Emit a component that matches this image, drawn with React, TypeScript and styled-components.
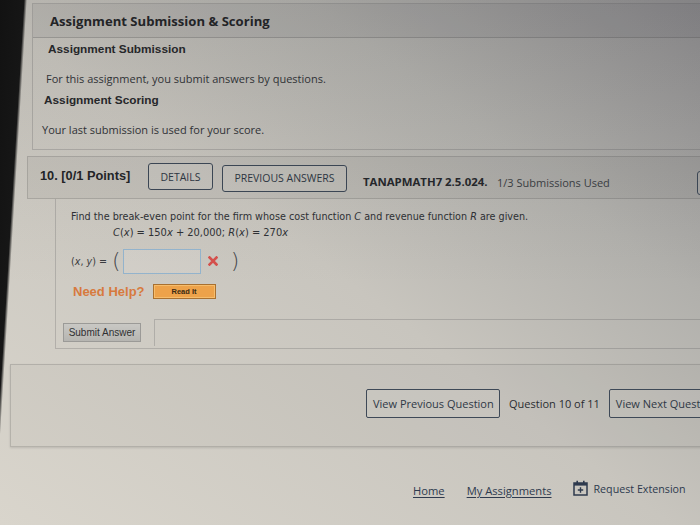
import React from "react";
import styled, { createGlobalStyle } from "styled-components";

const GlobalStyle = createGlobalStyle`
  html, body {
    margin: 0;
    padding: 0;
    width: 700px;
    height: 525px;
    overflow: hidden;
  }
  body {
    font-family: "Open Sans", "Liberation Sans", sans-serif;
    color: #2f3236;
    background:
      linear-gradient(93.5deg, #121212 0px, #161616 24px, rgba(0,0,0,0) 27px),
      linear-gradient(to bottom, rgba(40,40,40,0.08), rgba(40,40,40,0) 55%),
      linear-gradient(to top right, #d9d5cc 0%, #c8c5be 48%, #b1b0ac 72%, #8c8b8d 100%);
  }
`;

const Page = styled.div`
  width: 760px;
  padding-top: 3px;
  display: flex;
  flex-direction: column;
`;

/* ---------- summary panel ---------- */
const SummaryPanel = styled.section`
  margin-left: 32px;
  height: 145px;
  border: 1px solid rgba(70, 70, 72, 0.22);
  border-right: none;
  display: flex;
  flex-direction: column;
`;

const SummaryHeader = styled.div`
  height: 33px;
  display: flex;
  align-items: center;
  padding-left: 17px;
  background: rgba(60, 60, 64, 0.07);
  border-bottom: 1px solid rgba(70, 70, 72, 0.25);
`;

const Title = styled.h2`
  margin: 0;
  font-family: "Open Sans", sans-serif;
  font-weight: 700;
  font-size: 13.1px;
  color: #232427;
`;

const SubHeading = styled.div<{ $x: number; $top: number }>`
  margin-left: ${(p) => p.$x}px;
  margin-top: ${(p) => p.$top}px;
  height: 18px;
  line-height: 18px;
  font-family: "Liberation Sans", Arial, sans-serif;
  font-weight: 700;
  font-size: 11.8px;
  color: #26272a;
`;

const BodyText = styled.div<{ $x: number; $top: number }>`
  margin-left: ${(p) => p.$x}px;
  margin-top: ${(p) => p.$top}px;
  height: 18px;
  line-height: 18px;
  font-family: "Open Sans", sans-serif;
  font-size: 11px;
  color: #303236;
`;

/* ---------- question ---------- */
const QuestionBlock = styled.section`
  margin-left: 27px;
  margin-top: 6px;
  display: flex;
  flex-direction: column;
`;

const QuestionHeader = styled.div`
  height: 43px;
  box-sizing: border-box;
  border: 1px solid rgba(70, 70, 72, 0.2);
  border-right: none;
  background: rgba(60, 60, 64, 0.06);
  display: grid;
  grid-template-columns: 108px 74px 141px 134px 200px auto;
  align-items: center;
  padding-left: 12px;
`;

const Points = styled.span`
  font-family: "Liberation Sans", Arial, sans-serif;
  font-weight: 700;
  font-size: 12.8px;
  color: #232427;
  margin-top: -4px;
`;

const OutlineButton = styled.button<{ $w: number; $h: number; $drop?: number }>`
  width: ${(p) => p.$w}px;
  height: ${(p) => p.$h}px;
  margin-top: ${(p) => p.$drop ?? 0}px;
  box-sizing: border-box;
  border: 1.5px solid #3b4654;
  border-radius: 3px;
  background: rgba(255, 255, 255, 0.06);
  font-family: "Open Sans", sans-serif;
  font-size: 10.5px;
  color: #2d3642;
  padding: 0;
  white-space: nowrap;
  overflow: hidden;
  display: flex;
  align-items: center;
  justify-content: center;
`;

const Code = styled.span`
  font-family: "Open Sans", sans-serif;
  font-weight: 700;
  font-size: 11.4px;
  color: #25272b;
  margin-top: 8px;
`;

const Used = styled.span`
  font-family: "Open Sans", sans-serif;
  font-size: 11px;
  color: #3a3d42;
  margin-top: 10px;
`;

const QuestionBody = styled.div`
  margin-left: 28px;
  height: 150px;
  box-sizing: border-box;
  border-left: 1px solid rgba(70, 70, 72, 0.22);
  border-bottom: 1px solid rgba(70, 70, 72, 0.22);
  padding: 11px 0 0 15px;
  display: flex;
  flex-direction: column;
`;

const Prompt = styled.div`
  height: 14px;
  line-height: 14px;
  font-family: "DejaVu Sans", Verdana, sans-serif;
  font-size: 9.65px;
  color: #2e3034;
  white-space: nowrap;
`;

const Equation = styled(Prompt)`
  margin-top: 2px;
  margin-left: 42px;
  font-size: 9.9px;
`;

const Var = styled.i`
  font-style: italic;
`;

const AnswerRow = styled.div`
  margin-top: 7px;
  height: 28px;
  display: flex;
  align-items: center;
  font-family: "DejaVu Sans", Verdana, sans-serif;
  font-size: 9.6px;
  color: #3a3c40;
  white-space: pre;
`;

const Paren = styled.span<{ $side: "open" | "close" }>`
  font-family: "DejaVu Sans", sans-serif;
  font-size: 22px;
  font-weight: 300;
  color: #45474b;
  line-height: 28px;
  margin: ${(p) => (p.$side === "open" ? "0 2px 0 5px" : "0 2px")};
`;

const AnswerInput = styled.div`
  width: 78px;
  height: 25px;
  box-sizing: border-box;
  border: 1.5px solid #93b3cc;
  background: rgba(255, 255, 255, 0.1);
  margin-right: 7px;
`;

const Cross = styled.svg`
  width: 10px;
  height: 10px;
  margin-right: 11px;
`;

const HelpRow = styled.div`
  margin-top: 8px;
  height: 16px;
  display: flex;
  align-items: center;
  gap: 8px;
  padding-left: 2px;
`;

const NeedHelp = styled.span`
  font-family: "Liberation Sans", Arial, sans-serif;
  font-weight: 700;
  font-size: 13px;
  color: #d77a3e;
`;

const ReadIt = styled.button`
  width: 63px;
  height: 15px;
  box-sizing: border-box;
  border: 1px solid #a9702f;
  box-shadow: inset 0 0 0 1px #f6bd6c;
  background: #eda24a;
  font-family: "Liberation Sans", Arial, sans-serif;
  font-weight: 700;
  font-size: 7.5px;
  color: #3b2a14;
  padding: 0;
`;

const SubmitRow = styled.div`
  margin-top: 19px;
  margin-left: -8px;
  height: 28px;
  display: flex;
  align-items: center;
  gap: 13px;
`;

const SubmitButton = styled.button`
  width: 78px;
  height: 19px;
  margin-top: 0;
  box-sizing: border-box;
  border: 1px solid #9b9a97;
  background: linear-gradient(#c9c8c4, #b6b5b1);
  font-family: "Liberation Sans", Arial, sans-serif;
  font-size: 10px;
  color: #2f3032;
  padding: 0;
`;

const Feedback = styled.div`
  flex: 1;
  align-self: stretch;
  margin-top: 1px;
  border-top: 1px solid rgba(70, 70, 72, 0.22);
  border-left: 1px solid rgba(70, 70, 72, 0.22);
`;

/* ---------- navigation ---------- */
const NavPanel = styled.nav`
  margin-left: 10px;
  margin-top: 15px;
  height: 83px;
  box-sizing: border-box;
  border: 1px solid rgba(70, 70, 72, 0.2);
  border-right: none;
  background: rgba(60, 60, 64, 0.03);
  box-shadow: 0 1px 2px rgba(0, 0, 0, 0.12);
  display: flex;
  align-items: center;
  gap: 9px;
  padding-left: 355px;
  padding-bottom: 5px;
`;

const NavButton = styled.button<{ $w: number }>`
  width: ${(p) => p.$w}px;
  height: 29px;
  box-sizing: border-box;
  border: 1.5px solid #3e4957;
  border-radius: 2px;
  background: rgba(255, 255, 255, 0.05);
  font-family: "Open Sans", sans-serif;
  font-size: 11px;
  color: #2f3845;
  padding: 0 0 0 6px;
  text-align: left;
  white-space: nowrap;
  overflow: hidden;
  flex-shrink: 0;
`;

const NavLabel = styled.span`
  font-family: "Open Sans", sans-serif;
  font-size: 11px;
  color: #2a2d31;
  white-space: nowrap;
`;

/* ---------- footer ---------- */
const Footer = styled.footer`
  margin-top: 33px;
  height: 20px;
  display: flex;
  align-items: center;
  padding-left: 413px;
`;

const FooterLink = styled.a<{ $gap: number }>`
  margin-right: ${(p) => p.$gap}px;
  font-family: "Open Sans", sans-serif;
  font-size: 11.2px;
  color: #2e3a4e;
  text-decoration: underline;
  text-underline-offset: 2px;
  white-space: nowrap;
`;

const ExtensionLabel = styled.span`
  margin-left: 6px;
  font-family: "Open Sans", sans-serif;
  font-size: 10.7px;
  color: #2e3a4e;
  white-space: nowrap;
  margin-top: -3px;
`;

const CalendarIcon = styled.svg`
  width: 15px;
  height: 16px;
  margin-top: -5px;
  flex-shrink: 0;
`;

export default function App() {
  return (
    <>
      <GlobalStyle />
      <Page>
        <SummaryPanel>
          <SummaryHeader>
            <Title>Assignment Submission &amp; Scoring</Title>
          </SummaryHeader>
          <SubHeading $x={15} $top={2}>Assignment Submission</SubHeading>
          <BodyText $x={13} $top={12}>
            For this assignment, you submit answers by questions.
          </BodyText>
          <SubHeading $x={11} $top={3}>Assignment Scoring</SubHeading>
          <BodyText $x={9} $top={12}>
            Your last submission is used for your score.
          </BodyText>
        </SummaryPanel>

        <QuestionBlock>
          <QuestionHeader>
            <Points>10. [0/1 Points]</Points>
            <OutlineButton $w={65} $h={27} $drop={-2}>DETAILS</OutlineButton>
            <OutlineButton $w={125} $h={27} $drop={1}>PREVIOUS ANSWERS</OutlineButton>
            <Code>TANAPMATH7 2.5.024.</Code>
            <Used>1/3 Submissions Used</Used>
            <OutlineButton $w={40} $h={24} $drop={10}>
              {" "}
            </OutlineButton>
          </QuestionHeader>

          <QuestionBody>
            <Prompt>
              Find the break-even point for the firm whose cost function <Var>C</Var> and
              revenue function <Var>R</Var> are given.
            </Prompt>
            <Equation>
              <Var>C</Var>(<Var>x</Var>) = 150<Var>x</Var> + 20,000; <Var>R</Var>(<Var>x</Var>) = 270<Var>x</Var>
            </Equation>
            <AnswerRow>
              (<Var>x</Var>, <Var>y</Var>) =<Paren $side="open">(</Paren>
              <AnswerInput />
              <Cross viewBox="0 0 10 10">
                <path
                  d="M1.5 1.5 L8.5 8.5 M8.5 1.5 L1.5 8.5"
                  stroke="#d4504c"
                  strokeWidth="2.6"
                  strokeLinecap="square"
                />
              </Cross>
              <Paren $side="close">)</Paren>
            </AnswerRow>
            <HelpRow>
              <NeedHelp>Need Help?</NeedHelp>
              <ReadIt>Read It</ReadIt>
            </HelpRow>
            <SubmitRow>
              <SubmitButton>Submit Answer</SubmitButton>
              <Feedback />
            </SubmitRow>
          </QuestionBody>
        </QuestionBlock>

        <NavPanel>
          <NavButton $w={134}>View Previous Question</NavButton>
          <NavLabel>Question 10 of 11</NavLabel>
          <NavButton $w={120}>View Next Question</NavButton>
        </NavPanel>

        <Footer>
          <FooterLink $gap={22}>Home</FooterLink>
          <FooterLink $gap={21}>My Assignments</FooterLink>
          <CalendarIcon viewBox="0 0 15 16">
            <rect x="1" y="3" width="13" height="12" fill="none" stroke="#2e3a4e" strokeWidth="1.5" />
            <rect x="1" y="3" width="13" height="2.6" fill="#2e3a4e" />
            <path d="M4.2 0.8 V4 M10.8 0.8 V4" stroke="#2e3a4e" strokeWidth="1.6" />
            <path d="M7.5 7.3 V12.7 M4.8 10 H10.2" stroke="#2e3a4e" strokeWidth="1.4" />
          </CalendarIcon>
          <ExtensionLabel>Request Extension</ExtensionLabel>
        </Footer>
      </Page>
    </>
  );
}
